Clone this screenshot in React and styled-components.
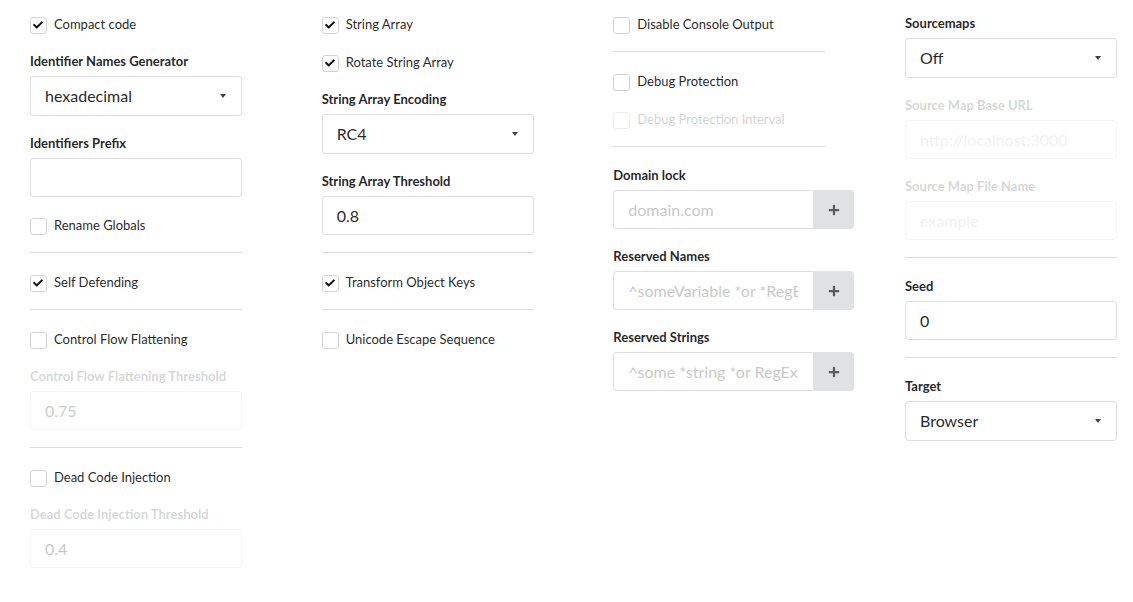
import React from 'react'
import styled, { createGlobalStyle } from 'styled-components'
import { FaCheck, FaPlus } from 'react-icons/fa'

const GlobalStyle = createGlobalStyle`
  html, body {
    margin: 0;
    padding: 0;
    background: #fff;
  }
  body {
    font-family: Lato, 'Helvetica Neue', Arial, sans-serif;
    font-size: 14px;
    line-height: 20px;
    color: rgba(0, 0, 0, 0.87);
  }
`

const Grid = styled.div`
  display: grid;
  grid-template-columns: repeat(4, 212px);
  column-gap: 79.67px;
  align-items: start;
  padding: 13px 0 0 30px;
`

const Column = styled.div`
  display: flex;
  flex-direction: column;
  gap: 17px;
  min-width: 0;
`

const Divider = styled.hr`
  margin: 0;
  height: 0;
  border: none;
  border-top: 1px solid rgba(34, 36, 38, 0.15);
  border-bottom: 1px solid rgba(255, 255, 255, 0.1);
`

const CheckRow = styled.label`
  box-sizing: content-box;
  display: flex;
  align-items: flex-start;
  gap: 7px;
  height: 17px;
  padding-top: 4px;
  font-size: 13px;
  color: ${(p) => (p.$disabled ? 'rgba(0, 0, 0, 0.2)' : 'rgba(0, 0, 0, 0.87)')};
  white-space: nowrap;
`

const CheckText = styled.span`
  line-height: 15px;
`

const Box = styled.span`
  box-sizing: border-box;
  flex: none;
  display: flex;
  align-items: center;
  justify-content: center;
  width: 17px;
  height: 17px;
  border: 1px solid ${(p) => (p.$disabled ? '#efefef' : '#d4d4d5')};
  border-radius: 3px;
  background: #fff;
  color: rgba(0, 0, 0, 0.95);

  svg {
    margin: -1px 1px 0 0;
  }
`

const Field = styled.div`
  display: flex;
  flex-direction: column;
`

const Label = styled.div`
  font-size: 13px;
  font-weight: 700;
  line-height: 20px;
  margin-bottom: 5px;
  color: ${(p) => (p.$disabled ? 'rgba(0, 0, 0, 0.18)' : 'rgba(0, 0, 0, 0.87)')};
  white-space: nowrap;
`

const Input = styled.input`
  box-sizing: border-box;
  width: 100%;
  height: 39px;
  margin: 0;
  padding: 0 14px;
  font-family: inherit;
  font-size: 16px;
  color: rgba(0, 0, 0, 0.87);
  background: #fff;
  border: 1px solid rgba(34, 36, 38, 0.15);
  border-radius: 4px;
  outline: none;
  opacity: ${(p) => (p.$disabled ? 0.25 : 1)};

  &::placeholder {
    color: rgba(191, 191, 191, 0.87);
  }
`

const Select = styled.div`
  box-sizing: border-box;
  display: flex;
  align-items: center;
  justify-content: space-between;
  height: 40px;
  padding: 0 15px 0 14px;
  font-size: 16px;
  color: rgba(0, 0, 0, 0.87);
  border: 1px solid rgba(34, 36, 38, 0.15);
  border-radius: 4px;
  background: #fff;
`

const Caret = styled.span`
  width: 0;
  height: 0;
  border-left: 3px solid transparent;
  border-right: 3px solid transparent;
  border-top: 4px solid rgba(0, 0, 0, 0.75);
`

const ActionBox = styled.div`
  display: flex;
  width: 241px;
  height: 39px;
`

const ActionInput = styled(Input)`
  flex: none;
  width: 200px;
  border-right-color: transparent;
  border-radius: 4px 0 0 4px;
`

const AddButton = styled.button`
  flex: none;
  display: flex;
  align-items: center;
  justify-content: center;
  width: 41px;
  padding: 0;
  border: none;
  border-radius: 0 4px 4px 0;
  background: #e0e1e2;
  color: rgba(0, 0, 0, 0.6);
`

const Checkbox = ({ label, checked, disabled }) => (
  <CheckRow $disabled={disabled}>
    <Box $disabled={disabled}>{checked && <FaCheck size={10} />}</Box>
    <CheckText>{label}</CheckText>
  </CheckRow>
)

const SelectField = ({ label, value }) => (
  <Field>
    <Label>{label}</Label>
    <Select>
      {value}
      <Caret />
    </Select>
  </Field>
)

const InputField = ({ label, value, placeholder, disabled }) => (
  <Field>
    <Label $disabled={disabled}>{label}</Label>
    <Input $disabled={disabled} readOnly value={value || ''} placeholder={placeholder} />
  </Field>
)

const ActionField = ({ label, placeholder }) => (
  <Field>
    <Label>{label}</Label>
    <ActionBox>
      <ActionInput readOnly value="" placeholder={placeholder} />
      <AddButton type="button">
        <FaPlus size={12} />
      </AddButton>
    </ActionBox>
  </Field>
)

const App = () => (
  <>
    <GlobalStyle />
    <Grid>
      <Column>
        <Checkbox label="Compact code" checked />
        <SelectField label="Identifier Names Generator" value="hexadecimal" />
        <InputField label="Identifiers Prefix" />
        <Checkbox label="Rename Globals" />
        <Divider />
        <Checkbox label="Self Defending" checked />
        <Divider />
        <Checkbox label="Control Flow Flattening" />
        <InputField label="Control Flow Flattening Threshold" value="0.75" disabled />
        <Divider />
        <Checkbox label="Dead Code Injection" />
        <InputField label="Dead Code Injection Threshold" value="0.4" disabled />
      </Column>

      <Column>
        <Checkbox label="String Array" checked />
        <Checkbox label="Rotate String Array" checked />
        <SelectField label="String Array Encoding" value="RC4" />
        <InputField label="String Array Threshold" value="0.8" />
        <Divider />
        <Checkbox label="Transform Object Keys" checked />
        <Divider />
        <Checkbox label="Unicode Escape Sequence" />
      </Column>

      <Column>
        <Checkbox label="Disable Console Output" />
        <Divider />
        <Checkbox label="Debug Protection" />
        <Checkbox label="Debug Protection Interval" disabled />
        <Divider />
        <ActionField label="Domain lock" placeholder="domain.com" />
        <ActionField label="Reserved Names" placeholder="^someVariable *or *RegExp" />
        <ActionField label="Reserved Strings" placeholder="^some *string *or RegExp" />
      </Column>

      <Column>
        <SelectField label="Sourcemaps" value="Off" />
        <InputField label="Source Map Base URL" placeholder="http://localhost:3000" disabled />
        <InputField label="Source Map File Name" placeholder="example" disabled />
        <Divider />
        <InputField label="Seed" value="0" />
        <Divider />
        <SelectField label="Target" value="Browser" />
      </Column>
    </Grid>
  </>
)

export default App
